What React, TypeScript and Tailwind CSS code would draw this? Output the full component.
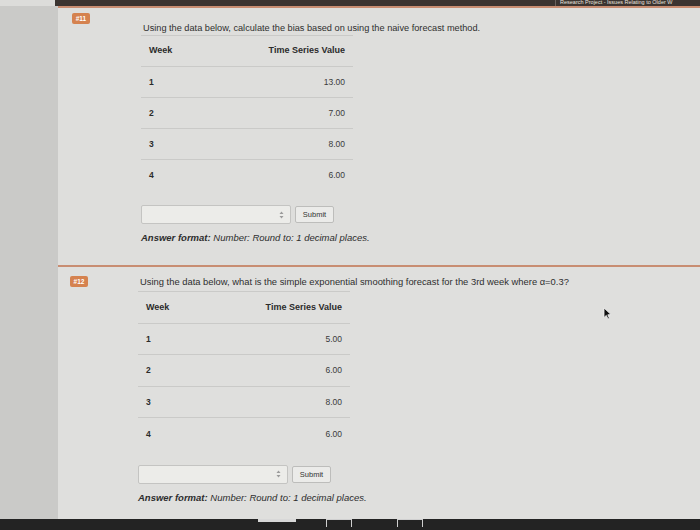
import React from "react";

const font = { fontFamily: '"Liberation Sans", Arial, sans-serif' };

type Row = { w: string; v: string };

function DataTable({ rows, rowH }: { rows: Row[]; rowH: string }) {
  return (
    <div className="w-[212px] border-t border-[#cacac8]">
      <div className={`flex items-center justify-between px-[8px] border-b border-[#cacac8] ${rowH}`}>
        <span className="text-[9px] font-bold text-[#2b2b2b]">Week</span>
        <span className="text-[9px] font-bold text-[#2b2b2b]">Time Series Value</span>
      </div>
      {rows.map((r, i) => (
        <div
          key={i}
          className={`flex items-center justify-between px-[8px] ${rowH} ${i < rows.length - 1 ? "border-b border-[#cacac8]" : ""}`}
        >
          <span className="text-[8.5px] font-bold text-[#2b2b2b]">{r.w}</span>
          <span className="text-[8.5px] text-[#3a3a3a]">{r.v}</span>
        </div>
      ))}
    </div>
  );
}

function AnswerBox() {
  return (
    <div className="flex flex-col">
      <div className="flex items-center gap-[4px]">
        <div className="w-[150px] h-[19px] bg-[#ecece9] border border-[#c4c4c2] rounded-[2px] flex items-center justify-end pr-[6px]">
          <svg width="5" height="8" viewBox="0 0 5 8">
            <path d="M2.5 0.5 L4.5 3 L0.5 3 Z" fill="#9a9a9a" />
            <path d="M2.5 7.5 L4.5 5 L0.5 5 Z" fill="#9a9a9a" />
          </svg>
        </div>
        <div className="w-[39px] h-[17px] bg-[#ebebe9] border border-[#bdbdbb] rounded-[2px] flex items-center justify-center text-[7.5px] text-[#333]">
          Submit
        </div>
      </div>
      <div className="mt-[7px] text-[9.5px] italic text-[#2d2d2d]">
        <span className="font-bold">Answer format:</span> Number: Round to: 1 decimal places.
      </div>
    </div>
  );
}

export default function App() {
  const q11: Row[] = [
    { w: "1", v: "13.00" },
    { w: "2", v: "7.00" },
    { w: "3", v: "8.00" },
    { w: "4", v: "6.00" },
  ];
  const q12: Row[] = [
    { w: "1", v: "5.00" },
    { w: "2", v: "6.00" },
    { w: "3", v: "8.00" },
    { w: "4", v: "6.00" },
  ];
  return (
    <div style={font} className="relative w-[700px] h-[530px] overflow-hidden bg-[#dcdcda] flex flex-col">
      {/* top dark bar */}
      <div className="h-[6px] bg-[#3b3431] ml-[55px] flex justify-end overflow-hidden">
        <div className="border-l border-[#6b625e] h-full w-[145px] flex items-center pl-[4px] overflow-hidden">
          <span className="text-[5.5px] leading-none text-[#e9e3df] whitespace-nowrap">
            Research Project - Issues Relating to Older W
          </span>
        </div>
      </div>
      <div className="flex flex-1">
        {/* left gutter */}
        <div className="w-[58px] bg-[#cacac8]" />
        <div className="flex-1 flex flex-col">
          {/* question 11 */}
          <div className="h-[2px] bg-[#c88d72]" />
          <div className="h-[257px] flex bg-[#dededc]">
            <div className="w-[83px] pt-[5px] pl-[14px]">
              <div className="w-[18px] h-[11px] rounded-[2px] bg-[#d5824f] text-white text-[6.5px] font-bold flex items-center justify-center">
                #11
              </div>
            </div>
            <div className="flex flex-col">
              <div className="pt-[16px] pl-[2px] text-[9.2px] text-[#2e2e2e] leading-none">
                Using the data below, calculate the bias based on using the naive forecast method.
              </div>
              <div className="mt-[2px]">
                <DataTable rows={q11} rowH="h-[31px]" />
              </div>
              <div className="mt-[14px]">
                <AnswerBox />
              </div>
            </div>
          </div>
          {/* question 12 */}
          <div className="h-[2px] bg-[#c88d72]" />
          <div className="flex-1 flex bg-[#dfdfdd]">
            <div className="w-[80px] pt-[9px] pl-[12px]">
              <div className="w-[18px] h-[11px] rounded-[2px] bg-[#d5824f] text-white text-[6.5px] font-bold flex items-center justify-center">
                #12
              </div>
            </div>
            <div className="flex flex-col">
              <div className="pt-[10px] pl-[2px] text-[9.4px] text-[#2e2e2e] leading-none">
                Using the data below, what is the simple exponential smoothing forecast for the 3rd week where α=0.3?
              </div>
              <div className="mt-[5px]">
                <DataTable rows={q12} rowH="h-[31.5px]" />
              </div>
              <div className="mt-[15px]">
                <AnswerBox />
              </div>
            </div>
          </div>
        </div>
      </div>
      {/* bottom dark bar */}
      <div className="h-[11px] bg-[#232323] flex items-start pl-[258px] gap-[30px]">
        <div className="w-[38px] h-[3px] bg-[#d8d8d8]" />
        <div className="w-[26px] h-[8px] border-t border-x border-[#cfcfcf]" />
        <div className="w-[26px] h-[8px] border-t border-x border-[#cfcfcf] ml-[15px]" />
      </div>
      {/* mouse cursor */}
      <svg className="absolute left-[603px] top-[307px]" width="9" height="13" viewBox="0 0 9 13">
        <path d="M1 1 L1 10.5 L3.3 8.4 L5 12 L6.4 11.3 L4.8 7.8 L8 7.6 Z" fill="#111" stroke="#f2f2f2" strokeWidth="0.8" />
      </svg>
    </div>
  );
}
